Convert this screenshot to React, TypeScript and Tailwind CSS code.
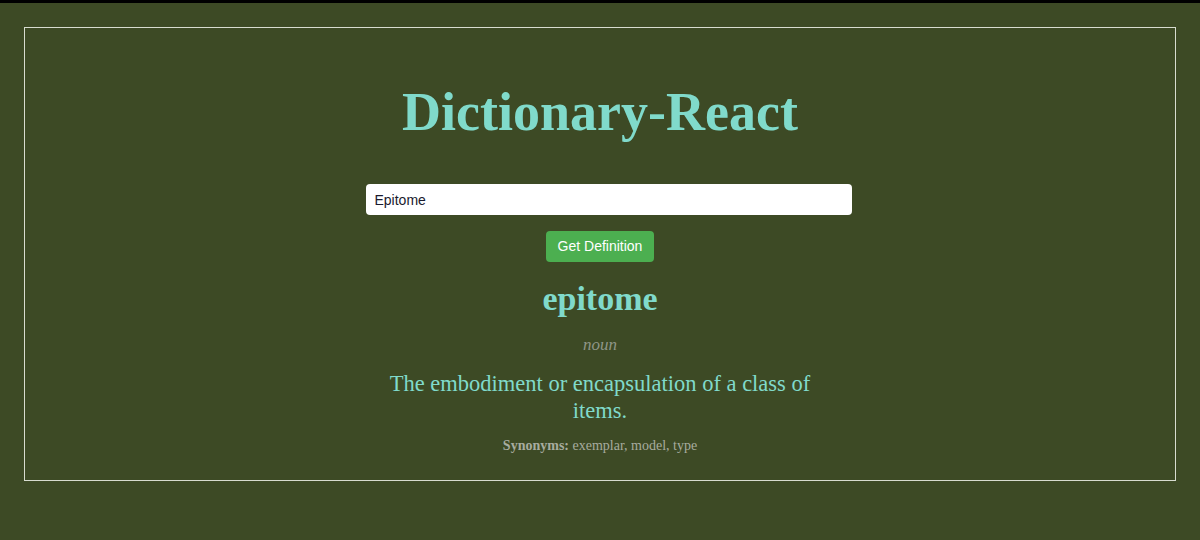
import { useState } from 'react'

export default function App() {
  const [word, setWord] = useState('Epitome')

  return (
    <div className="min-h-[540px] bg-[#3d4a25] font-['Liberation_Serif',serif]">
      <div className="h-[3px] bg-black" />
      <div className="px-6 pt-6">
        <div className="border border-[#d8dcd0] flex flex-col items-center pt-[52px] pb-[24px]">
          <h1 className="text-[54px] leading-[64px] font-bold text-[#80dacb]">Dictionary-React</h1>
          <input
            value={word}
            onChange={e => setWord(e.target.value)}
            className="mt-[40px] ml-[17px] w-[486px] h-[31px] rounded bg-white px-[9px] text-[14px] text-[#1a1a2e] font-['Liberation_Sans',sans-serif] outline-none"
          />
          <button className="mt-4 w-[108px] h-[31px] rounded bg-[#4caf50] text-white text-[14px] font-['Liberation_Sans',sans-serif]">
            Get Definition
          </button>
          <h2 className="mt-[17px] text-[34px] leading-[40px] font-bold text-[#80dacb]">epitome</h2>
          <p className="mt-[13px] text-[17px] italic text-[#8f9688]">noun</p>
          <p className="mt-[12px] w-[440px] text-center text-[22.5px] leading-[27px] text-[#80dacb]">
            The embodiment or encapsulation of a class of items.
          </p>
          <p className="mt-[11px] text-[14px] text-[#a7ac9f]">
            <span className="font-bold">Synonyms:</span> exemplar, model, type
          </p>
        </div>
      </div>
    </div>
  )
}
